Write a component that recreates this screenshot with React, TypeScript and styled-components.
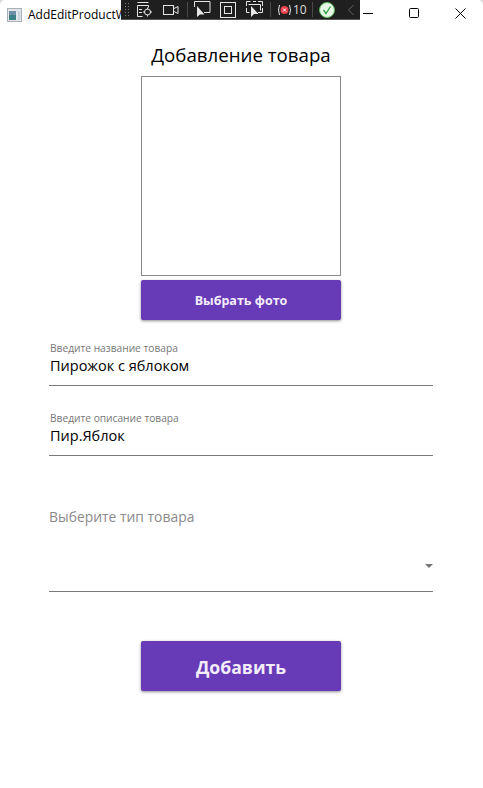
import React from 'react'
import styled, { createGlobalStyle } from 'styled-components'

const GlobalStyle = createGlobalStyle`
  html, body {
    margin: 0;
    padding: 0;
    background: #d9d9d9;
    font-family: "Open Sans", "Noto Sans", sans-serif;
  }
`
const Window = styled.div`
  position: relative;
  width: 483px;
  height: 788px;
  overflow: hidden;
  background: #fff;
  border-radius: 5px 5px 0 0;
`
const TitleBar = styled.div`
  height: 30px;
  display: flex;
  align-items: center;
  padding: 0 0 1px 7px;
  box-sizing: border-box;
`
const AppName = styled.span`
  margin-left: 6px;
  font-size: 12px;
  color: #000;
  white-space: nowrap;
`
const WindowButtons = styled.div`
  position: absolute;
  top: 0;
  right: 0;
  display: flex;
`
const WindowButton = styled.div`
  width: 46px;
  height: 26px;
  display: flex;
  align-items: center;
  justify-content: center;
`
const DebugBar = styled.div`
  position: absolute;
  top: 0;
  left: 121px;
  width: 239px;
  height: 19px;
  background: #1f1f1f;
  display: flex;
  align-items: center;
  color: #e6e6e6;
  box-shadow: 0 1px 0 #555;
`
const Grip = styled.div`
  width: 7px;
  height: 16px;
  margin: 0 6px 0 3px;
  background-image: radial-gradient(#777 0.6px, transparent 0.7px);
  background-size: 3px 3px;
`
const ToolIcon = styled.svg<{ $after: number }>`
  flex: none;
  margin-right: ${p => p.$after}px;
`
const ToolDivider = styled.div`
  width: 1px;
  height: 15px;
  background: #4a4a4a;
  margin-right: 6px;
`
const Count = styled.span`
  font-size: 12px;
  color: #ddd;
  width: 19px;
`
const Form = styled.div`
  width: 482px;
  display: flex;
  flex-direction: column;
  align-items: center;
`
const Heading = styled.h1`
  margin: 11px 0 7px;
  height: 28px;
  font-size: 18.7px;
  line-height: 28px;
  font-weight: 400;
  color: #000;
`
const PhotoFrame = styled.div`
  width: 200px;
  height: 200px;
  box-sizing: border-box;
  border: 1px solid #8a8a8a;
`
const PurpleButton = styled.button<{ $tall?: boolean }>`
  width: 200px;
  height: ${p => (p.$tall ? 50 : 40)}px;
  margin-top: ${p => (p.$tall ? 49 : 4)}px;
  padding: ${p => (p.$tall ? '2px 0 0' : 0)};
  border: none;
  border-radius: 2px;
  background: #673ab7;
  color: #f3ecfb;
  font-family: "Open Sans", sans-serif;
  font-size: ${p => (p.$tall ? 17.6 : 12.5)}px;
  font-weight: 700;
  box-shadow: 0 1px 3px rgba(0, 0, 0, 0.45);
`
const Field = styled.div<{ $top: number }>`
  width: 384px;
  height: 66px;
  margin-top: ${p => p.$top}px;
  box-sizing: border-box;
  border-bottom: 1px solid #7a7a7a;
  padding: 21px 1px 0;
`
const FloatLabel = styled.div`
  font-size: 10.2px;
  line-height: 14px;
  color: #777;
`
const Value = styled.div`
  margin-top: 1px;
  font-size: 14.5px;
  line-height: 20px;
  color: #000;
`
const SelectField = styled.div`
  position: relative;
  width: 384px;
  height: 136px;
  box-sizing: border-box;
  border-bottom: 1px solid #7a7a7a;
  padding-top: 51px;
`
const Placeholder = styled.div`
  font-size: 13.9px;
  line-height: 20px;
  color: #8a8a8a;
`
const Arrow = styled.div`
  position: absolute;
  right: 0;
  top: 108px;
  width: 0;
  height: 0;
  border-left: 4px solid transparent;
  border-right: 4px solid transparent;
  border-top: 4px solid #757575;
`

function AppIcon() {
  return (
    <svg width="15" height="14" viewBox="0 0 15 14">
      <rect x="0.5" y="0.5" width="14" height="13" fill="#e4e8ea" stroke="#a9b0b5" />
      <rect x="2" y="3" width="7" height="9" fill="#3f7f86" />
      <rect x="2" y="3" width="7" height="4" fill="#6f8fa6" />
      <rect x="11" y="3" width="2" height="9" fill="#c7d3d8" />
    </svg>
  )
}

export default function App() {
  const s = { fill: 'none', stroke: '#e6e6e6', strokeWidth: 1 }
  return (
    <Window>
      <GlobalStyle />
      <TitleBar>
        <AppIcon />
        <AppName>AddEditProductWindow</AppName>
      </TitleBar>
      <DebugBar>
        <Grip />
        <ToolIcon $after={10} width="16" height="18" viewBox="0 0 16 18">
          <path d="M0.5 1.5h11M0.5 4.5h11v2M0.5 4.5v11h5M2 8.5h3M2 11.5h3" {...s} />
          <circle cx="10.5" cy="11" r="3" {...s} />
          <path d="M10.5 6.5v2M10.5 13.5v2M6 11h2M13 11h2" {...s} />
        </ToolIcon>
        <ToolIcon $after={8} width="16" height="14" viewBox="0 0 16 14">
          <rect x="0.5" y="2.5" width="10" height="9" {...s} />
          <path d="M11 5.5l4-2v7l-4-2" {...s} />
        </ToolIcon>
        <ToolDivider />
        <ToolIcon $after={9} width="17" height="17" viewBox="0 0 17 17">
          <path d="M0.5 6V0.5h15.5v11h-6" {...s} />
          <path d="M3 5l0 11 3-2.5 4.5 0z" fill="#e6e6e6" />
        </ToolIcon>
        <ToolIcon $after={10} width="16" height="16" viewBox="0 0 16 16">
          <rect x="0.5" y="0.5" width="15" height="15" {...s} />
          <rect x="4.5" y="4.5" width="7" height="7" {...s} />
        </ToolIcon>
        <ToolIcon $after={7} width="17" height="17" viewBox="0 0 17 17">
          <path d="M0.5 5V0.5h4M7 0.5h3M12 0.5h4.5V5M16.5 7v4.5H12M0.5 7v4.5h3M2.5 3.5h12v6" {...s} />
          <path d="M5 5l0 11 3-3 4.5 0z" fill="#e6e6e6" />
        </ToolIcon>
        <ToolDivider />
        <ToolIcon $after={1} width="15" height="16" viewBox="0 0 15 16">
          <circle cx="7.5" cy="8" r="4" fill="#e8404a" />
          <path d="M6 6.5l3 3M9 6.5l-3 3" stroke="#fff" />
          <path d="M2.5 3Q0.5 8 2.5 13M12.5 3Q14.5 8 12.5 13" {...s} />
        </ToolIcon>
        <Count>10</Count>
        <ToolDivider />
        <ToolIcon $after={13} width="16" height="16" viewBox="0 0 16 16">
          <circle cx="8" cy="8" r="7.5" fill="#e6f5e6" stroke="#5cb85c" />
          <path d="M4.5 8l2.5 3.5 4.5-7" fill="none" stroke="#2f9e44" strokeWidth="1.3" />
        </ToolIcon>
        <ToolIcon $after={0} width="6" height="12" viewBox="0 0 6 12">
          <path d="M5.5 1l-5 5 5 5" fill="none" stroke="#666" />
        </ToolIcon>
      </DebugBar>
      <WindowButtons>
        <WindowButton>
          <svg width="10" height="10" viewBox="0 0 10 10"><path d="M0 5.5h10" stroke="#000" /></svg>
        </WindowButton>
        <WindowButton>
          <svg width="10" height="10" viewBox="0 0 10 10"><rect x="0.5" y="0.5" width="9" height="9" rx="1" fill="none" stroke="#000" /></svg>
        </WindowButton>
        <WindowButton>
          <svg width="11" height="11" viewBox="0 0 11 11"><path d="M0.5 0.5l10 10M10.5 0.5l-10 10" stroke="#000" /></svg>
        </WindowButton>
      </WindowButtons>
      <Form>
        <Heading>Добавление товара</Heading>
        <PhotoFrame />
        <PurpleButton>Выбрать фото</PurpleButton>
        <Field $top={0}>
          <FloatLabel>Введите название товара</FloatLabel>
          <Value>Пирожок с яблоком</Value>
        </Field>
        <Field $top={4}>
          <FloatLabel>Введите описание товара</FloatLabel>
          <Value>Пир.Яблок</Value>
        </Field>
        <SelectField>
          <Placeholder>Выберите тип товара</Placeholder>
          <Arrow />
        </SelectField>
        <PurpleButton $tall>Добавить</PurpleButton>
      </Form>
    </Window>
  )
}
